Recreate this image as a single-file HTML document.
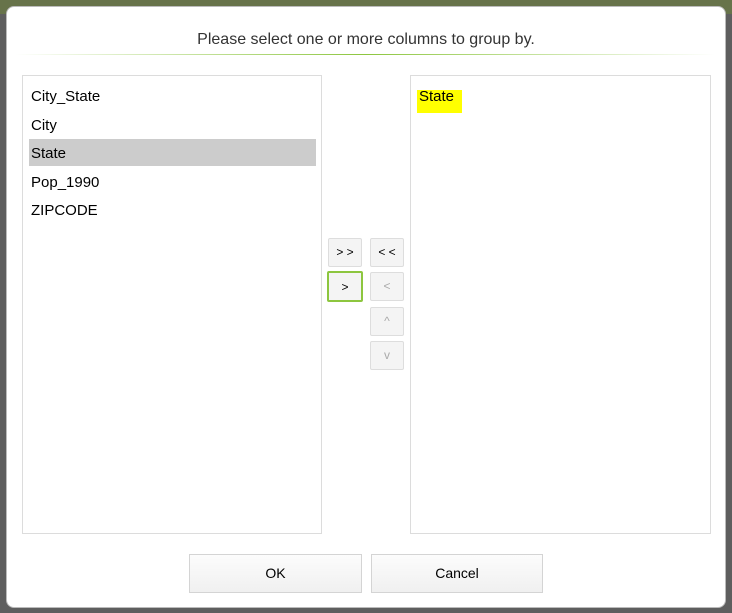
<!DOCTYPE html>
<html><head><style>
body{margin:0;width:732px;height:613px;background:#5e5e5e;position:relative;overflow:hidden;font-family:"Liberation Sans",sans-serif;}
.top{position:absolute;left:0;top:0;width:732px;height:14px;background:#67734a;}
.dlg{position:absolute;left:6px;top:6px;width:718px;height:600px;background:#fff;border:1px solid #bbb;border-radius:8px;}
.a{position:absolute;}
.title{left:0;width:732px;top:31px;text-align:center;font-size:16px;color:#333;}
.line{left:15px;width:700px;top:54px;height:1px;background:linear-gradient(90deg,rgba(141,198,63,0),#8dc63f 50%,rgba(141,198,63,0));}
.list{border:1px solid #dcdcdc;background:#fff;}
.it{position:absolute;font-size:15px;color:#000;left:8px;}
.btn{border:1px solid #ddd;background:#f4f4f4;font-size:12px;text-align:center;box-sizing:border-box;border-radius:2px;}
.dis{color:#aaa;}
.big{border:1px solid #d4d4d4;background:linear-gradient(#fcfcfc,#f0f0f0);font-size:14px;text-align:center;line-height:36px;box-sizing:border-box;}
</style></head><body>
<div class="top"></div>
<div class="dlg"></div>
<div class="a title">Please select one or more columns to group by.</div>
<div class="a line"></div>
<div class="a list" style="left:22px;top:75px;width:298px;height:457px;">
<div class="a" style="left:6px;top:63px;width:287px;height:27px;background:#cccccc"></div>
<div class="it" style="top:12px">City_State</div>
<div class="it" style="top:41px">City</div>
<div class="it" style="top:69px">State</div>
<div class="it" style="top:98px">Pop_1990</div>
<div class="it" style="top:126px">ZIPCODE</div>
</div>
<div class="a list" style="left:410px;top:75px;width:299px;height:457px;">
<div class="a" style="left:6px;top:14px;width:45px;height:23px;background:#ffff00"></div>
<div class="it" style="top:12px">State</div>
</div>
<div class="a btn" style="left:328px;top:238px;width:34px;height:29px;line-height:27px">&gt; &gt;</div>
<div class="a btn" style="left:370px;top:238px;width:34px;height:29px;line-height:27px">&lt; &lt;</div>
<div class="a btn" style="left:327px;top:271px;width:36px;height:31px;line-height:29px;border:2px solid #8dc63f">&gt;</div>
<div class="a btn dis" style="left:370px;top:272px;width:34px;height:29px;line-height:27px">&lt;</div>
<div class="a btn dis" style="left:370px;top:307px;width:34px;height:29px;line-height:27px">^</div>
<div class="a btn dis" style="left:370px;top:341px;width:34px;height:29px;line-height:27px">v</div>
<div class="a big" style="left:189px;top:554px;width:173px;height:39px">OK</div>
<div class="a big" style="left:371px;top:554px;width:172px;height:39px">Cancel</div>
</body></html>
